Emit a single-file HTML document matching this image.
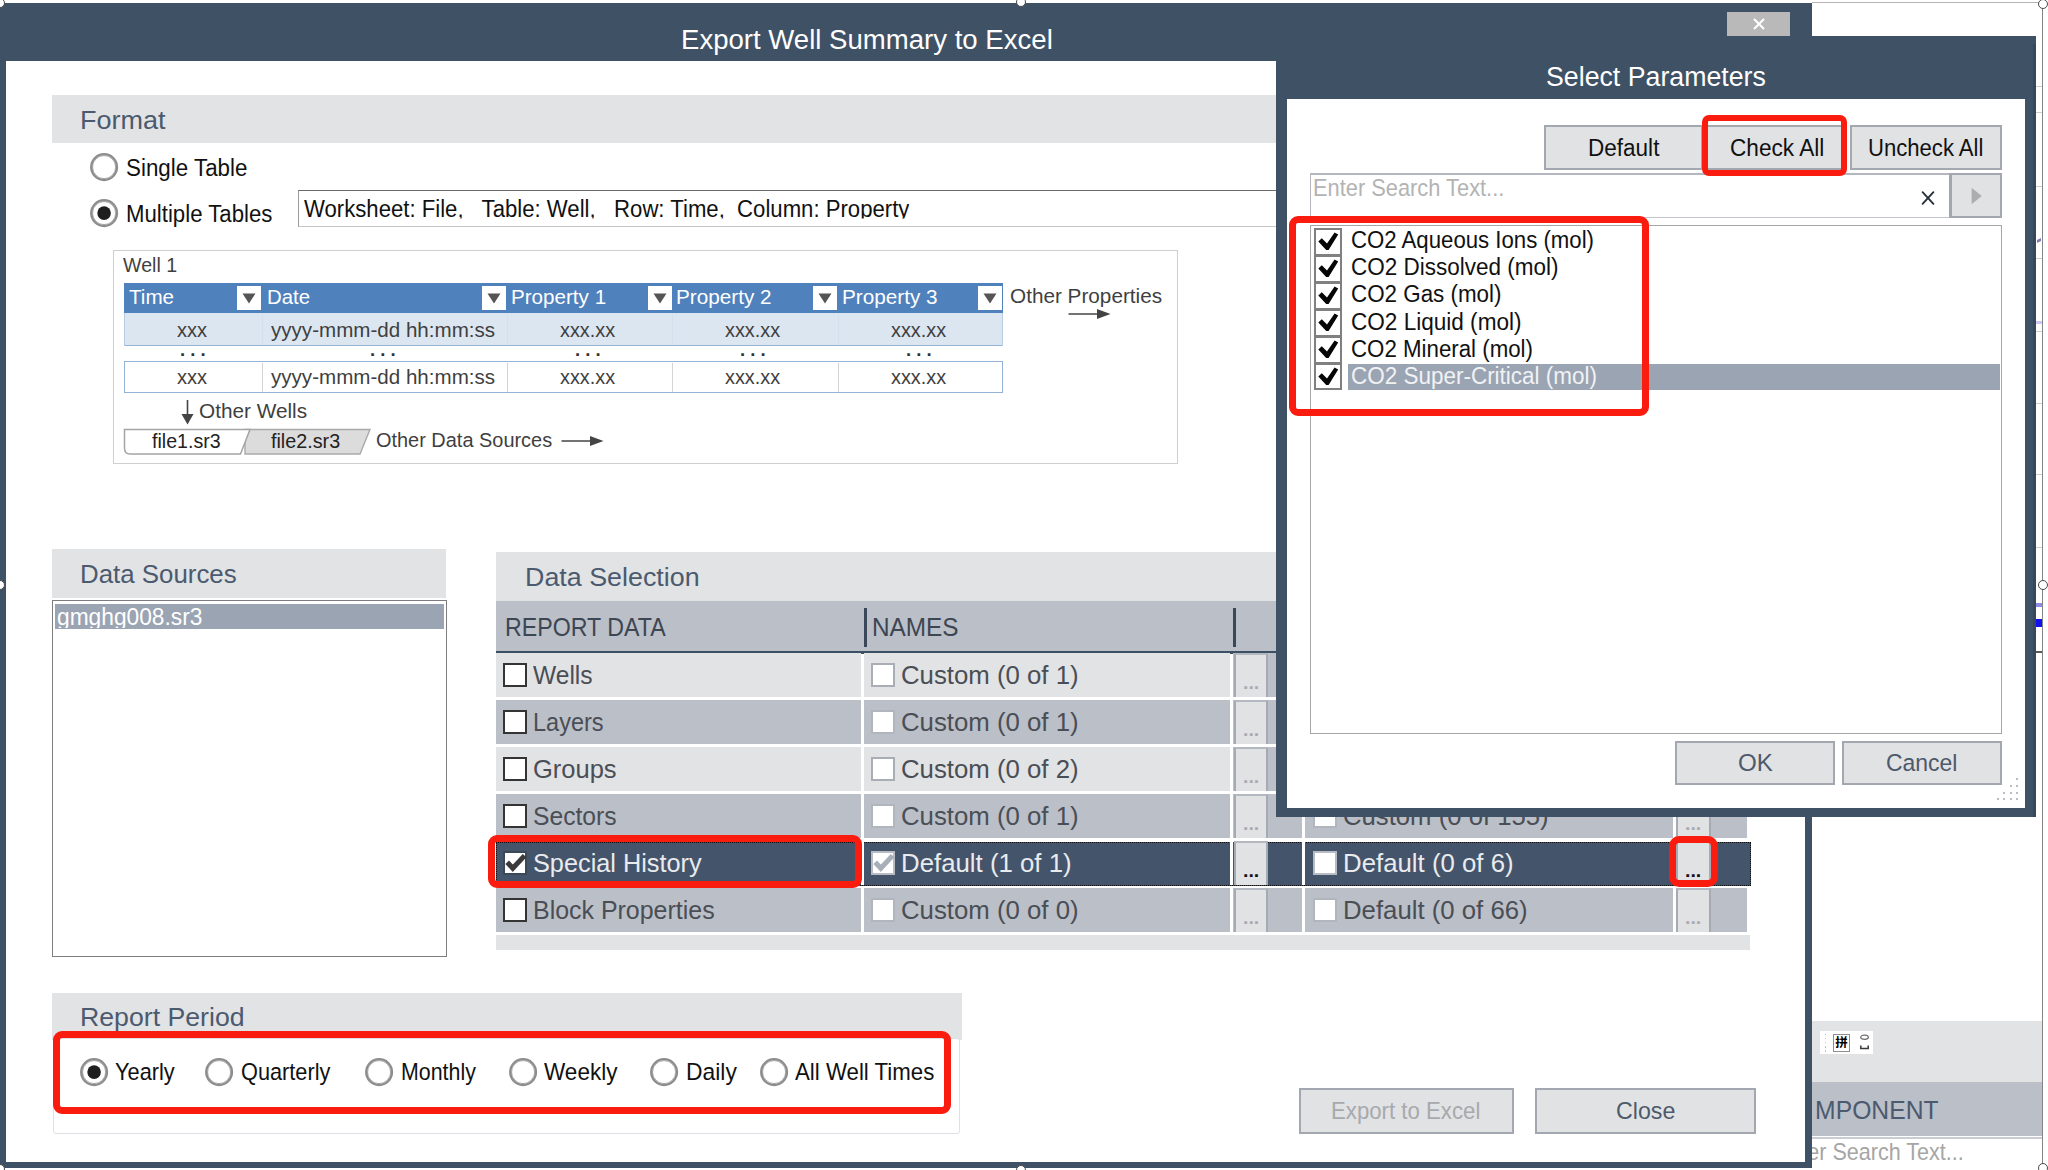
<!DOCTYPE html>
<html lang="en"><head><meta charset="utf-8"><title>Export Well Summary to Excel</title>
<style>
html,body{margin:0;padding:0;}
html{width:2048px;height:1170px;overflow:hidden;}
.stage{left:0;top:0;width:2048px;height:1170px;overflow:hidden;}
body{width:2048px;height:1170px;overflow:hidden;background:#fff;position:relative;
font-family:"Liberation Sans","Noto Sans CJK SC",sans-serif;}
div,span,svg{position:absolute;}
.t{white-space:pre;transform-origin:0 0;display:block;}
</style></head>
<body>
<div class="stage">
<div style="left:1812px;top:1021px;width:230px;height:61px;background:#e2e3e5;"></div>
<div style="left:1812px;top:1082px;width:230px;height:54px;background:#bbbfc8;"></div>
<div style="left:1812px;top:1137px;width:230px;height:2px;background:#c9ccd3;"></div>
<span class="t" style="left:1777.69px;top:1093.00px;font-size:26.16px;line-height:34px;height:34px;color:#4b5a6f;transform:scaleX(0.9447);clip-path:inset(0 0 0 39px);">COMPONENT</span>
<span class="t" style="left:1775.34px;top:1137.00px;font-size:23.26px;line-height:30px;height:30px;color:#a6a6a6;transform:scaleX(0.9267);">Enter Search Text...</span>
<div style="left:1820px;top:1031px;width:53px;height:23px;background:#ffffff;"></div>
<span class="t" style="left:1833px;top:1034px;font-size:12.5px;line-height:16px;color:#000;font-weight:700;border:1px solid #8f8f8f;width:15px;height:16px;text-align:center;">拼</span>
<svg style="left:1858px;top:1033px" width="14" height="20"><ellipse cx="6.5" cy="4.3" rx="3.8" ry="2.1" fill="none" stroke="#6a6a6a" stroke-width="1.3"/><path d="M2.8 12.6 V15.6 H10.2 V12.6" fill="none" stroke="#3a3a3a" stroke-width="1.5"/></svg>
<div style="left:1824.5px;top:1033.5px;width:1.5px;height:1.5px;background:#c4c4c4;"></div>
<div style="left:1824.5px;top:1037.7px;width:1.5px;height:1.5px;background:#c4c4c4;"></div>
<div style="left:1824.5px;top:1041.9px;width:1.5px;height:1.5px;background:#c4c4c4;"></div>
<div style="left:1824.5px;top:1046.1px;width:1.5px;height:1.5px;background:#c4c4c4;"></div>
<div style="left:1824.5px;top:1050.3px;width:1.5px;height:1.5px;background:#c4c4c4;"></div>
<div style="left:1812px;top:2px;width:231px;height:1px;background:#b5b5b5;"></div>
<div style="left:2042px;top:0px;width:1.2px;height:1170px;background:#858585;"></div>
<div style="left:2036px;top:86px;width:6px;height:1px;background:#cfcfcf;"></div>
<div style="left:2036px;top:112px;width:6px;height:1px;background:#cfcfcf;"></div>
<div style="left:2036px;top:186px;width:6px;height:1px;background:#cfcfcf;"></div>
<div style="left:2036px;top:258px;width:6px;height:1px;background:#cfcfcf;"></div>
<div style="left:2036px;top:331px;width:6px;height:1px;background:#cfcfcf;"></div>
<div style="left:2036px;top:402.5px;width:6px;height:1px;background:#cfcfcf;"></div>
<div style="left:2036px;top:474px;width:6px;height:1px;background:#cfcfcf;"></div>
<div style="left:2036px;top:547px;width:6px;height:1px;background:#cfcfcf;"></div>
<div style="left:2037px;top:239px;width:4px;height:2.5px;background:#7d7db8;transform:skewY(-25deg);"></div>
<div style="left:2036px;top:321px;width:6px;height:3px;background:#c9c9f2;"></div>
<div style="left:2036px;top:603px;width:6px;height:4px;background:#8c8ce6;"></div>
<div style="left:2036px;top:619px;width:6px;height:8px;background:#1212ee;"></div>
<div style="left:2036px;top:650.5px;width:6px;height:2px;background:#5a5a5a;"></div>
<div style="left:0px;top:2.8px;width:1812px;height:1165px;background:#3f5165;"></div>
<div style="left:6px;top:61px;width:1799px;height:1101px;background:#ffffff;"></div>
<span class="t" style="left:680.62px;top:20.50px;font-size:27.62px;line-height:37px;height:37px;color:#ffffff;transform:scaleX(0.9985);">Export Well Summary to Excel</span>
<div style="left:1727px;top:12px;width:63px;height:24px;background:#b9b9b9;"></div>
<svg style="left:1751px;top:16px" width="16" height="16" viewBox="0 0 16 16"><path d="M3 3 L13 13 M13 3 L3 13" stroke="#fff" stroke-width="2" fill="none"/></svg>
<div style="left:52px;top:95px;width:1224px;height:48px;background:#e2e3e5;"></div>
<span class="t" style="left:79.69px;top:102.75px;font-size:26.16px;line-height:34px;height:34px;color:#4b5a6f;transform:scaleX(1.0335);">Format</span>
<svg style="left:88.9px;top:152.1px" width="30.2" height="30.2"><circle cx="15.1" cy="15.1" r="12.9" fill="#fff" stroke="#8d8d8d" stroke-width="2.3"/><circle cx="15.1" cy="15.1" r="11.5" fill="none" stroke="#3a3a3a" stroke-width="0.7" opacity="0.55"/></svg>
<svg style="left:88.9px;top:197.8px" width="30.2" height="30.2"><circle cx="15.1" cy="15.1" r="12.9" fill="#fff" stroke="#8d8d8d" stroke-width="2.3"/><circle cx="15.1" cy="15.1" r="11.5" fill="none" stroke="#3a3a3a" stroke-width="0.7" opacity="0.55"/><circle cx="15.1" cy="15.1" r="6.8" fill="#1f1f1f"/></svg>
<span class="t" style="left:125.80px;top:152.00px;font-size:23.98px;line-height:31px;height:31px;color:#111;transform:scaleX(0.9327);">Single Table</span>
<span class="t" style="left:125.80px;top:197.50px;font-size:23.98px;line-height:31px;height:31px;color:#111;transform:scaleX(0.9259);">Multiple Tables</span>
<div style="left:298px;top:190px;width:992px;height:37px;background:#fff;border:1px solid #c6c6c6;border-top:1.5px solid #6a6a6a;border-left:1.2px solid #9a9a9a;box-sizing:border-box;overflow:hidden;"></div>
<span class="t" style="left:303.80px;top:192.50px;font-size:23.98px;line-height:31px;height:31px;color:#111;transform:scaleX(0.9237);clip-path:inset(0 0 5px 0);">Worksheet: File,   Table: Well,   Row: Time,  Column: Property</span>
<div style="left:113px;top:250px;width:1065px;height:214px;background:#fff;border:1.5px solid #cfcfcf;box-sizing:border-box;"></div>
<span class="t" style="left:122.95px;top:251.00px;font-size:21.08px;line-height:27px;height:27px;color:#3f3f3f;transform:scaleX(0.9299);">Well 1</span>
<div style="left:124px;top:283px;width:879px;height:30px;background:#4f81bd;"></div>
<span class="t" style="left:128.95px;top:283.00px;font-size:21.08px;line-height:27px;height:27px;color:#fff;transform:scaleX(0.9793);">Time</span>
<div style="left:237px;top:286px;width:24px;height:24px;background:#fff;"></div>
<svg style="left:237px;top:286px" width="24" height="24"><path d="M5.5 7.5 L18.5 7.5 L12 17.5 Z" fill="#555"/></svg>
<span class="t" style="left:266.95px;top:283.00px;font-size:21.08px;line-height:27px;height:27px;color:#fff;transform:scaleX(0.9680);">Date</span>
<div style="left:482px;top:286px;width:24px;height:24px;background:#fff;"></div>
<svg style="left:482px;top:286px" width="24" height="24"><path d="M5.5 7.5 L18.5 7.5 L12 17.5 Z" fill="#555"/></svg>
<span class="t" style="left:510.95px;top:283.00px;font-size:21.08px;line-height:27px;height:27px;color:#fff;transform:scaleX(0.9780);">Property 1</span>
<div style="left:647.5px;top:286px;width:24px;height:24px;background:#fff;"></div>
<svg style="left:647.5px;top:286px" width="24" height="24"><path d="M5.5 7.5 L18.5 7.5 L12 17.5 Z" fill="#555"/></svg>
<span class="t" style="left:676.45px;top:283.00px;font-size:21.08px;line-height:27px;height:27px;color:#fff;transform:scaleX(0.9831);">Property 2</span>
<div style="left:813px;top:286px;width:24px;height:24px;background:#fff;"></div>
<svg style="left:813px;top:286px" width="24" height="24"><path d="M5.5 7.5 L18.5 7.5 L12 17.5 Z" fill="#555"/></svg>
<span class="t" style="left:841.95px;top:283.00px;font-size:21.08px;line-height:27px;height:27px;color:#fff;transform:scaleX(0.9831);">Property 3</span>
<div style="left:978px;top:286px;width:24px;height:24px;background:#fff;"></div>
<svg style="left:978px;top:286px" width="24" height="24"><path d="M5.5 7.5 L18.5 7.5 L12 17.5 Z" fill="#555"/></svg>
<div style="left:124px;top:313px;width:879px;height:33px;background:#dce6f1;border-bottom:1.5px solid #95b3d7;box-sizing:border-box;"></div>
<div style="left:124px;top:313px;width:1px;height:33px;background:#b8cce4;"></div>
<div style="left:1002px;top:313px;width:1px;height:33px;background:#b8cce4;"></div>
<div style="left:124px;top:361px;width:879px;height:32px;background:#fff;border:1.5px solid #95b3d7;box-sizing:border-box;"></div>
<div style="left:261.5px;top:362.5px;width:1px;height:29px;background:#d4d4d4;"></div>
<div style="left:261.5px;top:314px;width:1px;height:30.5px;background:#d5e0ee;"></div>
<div style="left:506.5px;top:362.5px;width:1px;height:29px;background:#d4d4d4;"></div>
<div style="left:506.5px;top:314px;width:1px;height:30.5px;background:#d5e0ee;"></div>
<div style="left:672px;top:362.5px;width:1px;height:29px;background:#d4d4d4;"></div>
<div style="left:672px;top:314px;width:1px;height:30.5px;background:#d5e0ee;"></div>
<div style="left:837.5px;top:362.5px;width:1px;height:29px;background:#d4d4d4;"></div>
<div style="left:837.5px;top:314px;width:1px;height:30.5px;background:#d5e0ee;"></div>
<span class="t" style="left:176.95px;top:316.00px;font-size:21.08px;line-height:27px;height:27px;color:#3f3f3f;transform:scaleX(0.9520);">xxx</span>
<span class="t" style="left:270.95px;top:316.00px;font-size:21.08px;line-height:27px;height:27px;color:#3f3f3f;transform:scaleX(0.9764);">yyyy-mmm-dd hh:mm:ss</span>
<span class="t" style="left:559.95px;top:316.00px;font-size:21.08px;line-height:27px;height:27px;color:#3f3f3f;transform:scaleX(0.9410);">xxx.xx</span>
<span class="t" style="left:725.45px;top:316.00px;font-size:21.08px;line-height:27px;height:27px;color:#3f3f3f;transform:scaleX(0.9410);">xxx.xx</span>
<span class="t" style="left:890.95px;top:316.00px;font-size:21.08px;line-height:27px;height:27px;color:#3f3f3f;transform:scaleX(0.9410);">xxx.xx</span>
<span class="t" style="left:176.95px;top:362.50px;font-size:21.08px;line-height:27px;height:27px;color:#3f3f3f;transform:scaleX(0.9520);">xxx</span>
<span class="t" style="left:270.95px;top:362.50px;font-size:21.08px;line-height:27px;height:27px;color:#3f3f3f;transform:scaleX(0.9764);">yyyy-mmm-dd hh:mm:ss</span>
<span class="t" style="left:559.95px;top:362.50px;font-size:21.08px;line-height:27px;height:27px;color:#3f3f3f;transform:scaleX(0.9410);">xxx.xx</span>
<span class="t" style="left:725.45px;top:362.50px;font-size:21.08px;line-height:27px;height:27px;color:#3f3f3f;transform:scaleX(0.9410);">xxx.xx</span>
<span class="t" style="left:890.95px;top:362.50px;font-size:21.08px;line-height:27px;height:27px;color:#3f3f3f;transform:scaleX(0.9410);">xxx.xx</span>
<span class="t" style="left:179.63px;top:337.50px;font-size:17.44px;line-height:24px;height:24px;color:#333;font-weight:700;transform:scaleX(1.0623);">. . .</span>
<span class="t" style="left:370.13px;top:337.50px;font-size:17.44px;line-height:24px;height:24px;color:#333;font-weight:700;transform:scaleX(1.0623);">. . .</span>
<span class="t" style="left:574.63px;top:337.50px;font-size:17.44px;line-height:24px;height:24px;color:#333;font-weight:700;transform:scaleX(1.0623);">. . .</span>
<span class="t" style="left:740.13px;top:337.50px;font-size:17.44px;line-height:24px;height:24px;color:#333;font-weight:700;transform:scaleX(1.0623);">. . .</span>
<span class="t" style="left:905.63px;top:337.50px;font-size:17.44px;line-height:24px;height:24px;color:#333;font-weight:700;transform:scaleX(1.0623);">. . .</span>
<svg style="left:180px;top:398px" width="16" height="28"><path d="M7.5 2 V21" stroke="#444" stroke-width="1.6" fill="none"/><path d="M1.5 16 L13.5 16 L7.5 26.5 Z" fill="#444"/></svg>
<span class="t" style="left:198.95px;top:397.00px;font-size:21.08px;line-height:27px;height:27px;color:#3f3f3f;transform:scaleX(0.9853);">Other Wells</span>
<svg style="left:120px;top:426px" width="260" height="32" viewBox="120 426 260 32"><path d="M245 429.5 H370 L360 454 H245 Z" fill="#dcdcdc" stroke="#a9a9a9" stroke-width="1.4"/><path d="M124.5 429.5 H250 L240.5 454 H130 Q124.5 454 124.5 448 Z" fill="#fff" stroke="#a4a4a4" stroke-width="1.5"/></svg>
<span class="t" style="left:152.45px;top:426.60px;font-size:21.08px;line-height:27px;height:27px;color:#222;transform:scaleX(0.9295);">file1.sr3</span>
<span class="t" style="left:271.45px;top:426.60px;font-size:21.08px;line-height:27px;height:27px;color:#222;transform:scaleX(0.9363);">file2.sr3</span>
<span class="t" style="left:375.95px;top:426.00px;font-size:21.08px;line-height:27px;height:27px;color:#3f3f3f;transform:scaleX(0.9454);">Other Data Sources</span>
<svg style="left:560px;top:434px" width="46" height="14"><path d="M1.5 7 H32" stroke="#444" stroke-width="1.5"/><path d="M30 2 L43.5 7 L30 12 Z" fill="#444"/></svg>
<span class="t" style="left:1009.95px;top:282.00px;font-size:21.08px;line-height:27px;height:27px;color:#3f3f3f;transform:scaleX(0.9836);">Other Properties</span>
<svg style="left:1067px;top:307px" width="46" height="14"><path d="M1.5 7 H32" stroke="#444" stroke-width="1.5"/><path d="M30 2 L43.5 7 L30 12 Z" fill="#444"/></svg>
<div style="left:52px;top:549px;width:394px;height:49px;background:#e2e3e5;"></div>
<span class="t" style="left:79.69px;top:557.00px;font-size:26.16px;line-height:34px;height:34px;color:#4b5a6f;transform:scaleX(0.9882);">Data Sources</span>
<div style="left:52px;top:600px;width:395px;height:357px;background:#fff;border:1.3px solid #7d7d7d;box-sizing:border-box;"></div>
<div style="left:55px;top:604px;width:389px;height:24.5px;background:#9ba4b3;overflow:hidden;"></div>
<span class="t" style="left:56.80px;top:601.00px;font-size:23.98px;line-height:31px;height:31px;color:#fff;transform:scaleX(0.9489);clip-path:inset(0 0 4px 0);">gmghg008.sr3</span>
<div style="left:496px;top:552px;width:1254px;height:49px;background:#e2e3e5;"></div>
<span class="t" style="left:524.69px;top:559.50px;font-size:26.16px;line-height:34px;height:34px;color:#4b5a6f;transform:scaleX(1.0264);">Data Selection</span>
<div style="left:496px;top:601px;width:1254px;height:50px;background:#bbbfc8;"></div>
<div style="left:496px;top:650.5px;width:1254px;height:3px;background:#3c4f63;"></div>
<div style="left:863.5px;top:608px;width:3px;height:39px;background:#3a4859;"></div>
<div style="left:1232.5px;top:608px;width:3px;height:39px;background:#3a4859;"></div>
<div style="left:1304.5px;top:608px;width:3px;height:39px;background:#3a4859;"></div>
<span class="t" style="left:504.69px;top:609.50px;font-size:26.16px;line-height:34px;height:34px;color:#3d4653;transform:scaleX(0.8864);">REPORT DATA</span>
<span class="t" style="left:871.69px;top:609.50px;font-size:26.16px;line-height:34px;height:34px;color:#3d4653;transform:scaleX(0.9312);">NAMES</span>
<div style="left:496px;top:653px;width:365px;height:44px;background:#e2e3e5;"></div>
<div style="left:864px;top:653px;width:366px;height:44px;background:#e2e3e5;"></div>
<div style="left:1233px;top:653px;width:69px;height:44px;background:#bbbfc8;"></div>
<div style="left:1305px;top:653px;width:368px;height:44px;background:#e2e3e5;"></div>
<div style="left:1676px;top:653px;width:71px;height:44px;background:#bbbfc8;"></div>
<div style="left:1234px;top:653px;width:34px;height:44px;background:#e1e2e4;border-left:2px solid #a6aab3;border-right:2px solid #a6aab3;border-top:2px solid #b4b8c0;box-sizing:border-box;"></div>
<span class="t" style="left:1242.63px;top:670.50px;font-size:17.44px;line-height:24px;height:24px;color:#a9abb0;font-weight:700;transform:scaleX(1.1167);">...</span>
<div style="left:1676px;top:653px;width:34.5px;height:44px;background:#e1e2e4;border-left:2px solid #a6aab3;border-right:2px solid #a6aab3;border-top:2px solid #b4b8c0;box-sizing:border-box;"></div>
<span class="t" style="left:1684.63px;top:670.50px;font-size:17.44px;line-height:24px;height:24px;color:#a9abb0;font-weight:700;transform:scaleX(1.1167);">...</span>
<div style="left:503px;top:663px;width:24px;height:24px;background:#fff;border:2.7px solid #343434;box-sizing:border-box;"></div>
<span class="t" style="left:532.69px;top:658.30px;font-size:26.16px;line-height:34px;height:34px;color:#4a4e55;transform:scaleX(0.9393);">Wells</span>
<div style="left:871px;top:663px;width:24px;height:24px;background:#fff;border:2.3px solid #a9adb6;box-sizing:border-box;"></div>
<span class="t" style="left:900.69px;top:658.30px;font-size:26.16px;line-height:34px;height:34px;color:#4a4e55;transform:scaleX(0.9854);">Custom (0 of 1)</span>
<div style="left:496px;top:700px;width:365px;height:44px;background:#bbbfc8;"></div>
<div style="left:864px;top:700px;width:366px;height:44px;background:#bbbfc8;"></div>
<div style="left:1233px;top:700px;width:69px;height:44px;background:#bbbfc8;"></div>
<div style="left:1305px;top:700px;width:368px;height:44px;background:#bbbfc8;"></div>
<div style="left:1676px;top:700px;width:71px;height:44px;background:#bbbfc8;"></div>
<div style="left:1234px;top:700px;width:34px;height:44px;background:#e1e2e4;border-left:2px solid #a6aab3;border-right:2px solid #a6aab3;border-top:2px solid #b4b8c0;box-sizing:border-box;"></div>
<span class="t" style="left:1242.63px;top:717.50px;font-size:17.44px;line-height:24px;height:24px;color:#a9abb0;font-weight:700;transform:scaleX(1.1167);">...</span>
<div style="left:1676px;top:700px;width:34.5px;height:44px;background:#e1e2e4;border-left:2px solid #a6aab3;border-right:2px solid #a6aab3;border-top:2px solid #b4b8c0;box-sizing:border-box;"></div>
<span class="t" style="left:1684.63px;top:717.50px;font-size:17.44px;line-height:24px;height:24px;color:#a9abb0;font-weight:700;transform:scaleX(1.1167);">...</span>
<div style="left:503px;top:710px;width:24px;height:24px;background:#fff;border:2.7px solid #343434;box-sizing:border-box;"></div>
<span class="t" style="left:532.69px;top:705.30px;font-size:26.16px;line-height:34px;height:34px;color:#4a4e55;transform:scaleX(0.8994);">Layers</span>
<div style="left:871px;top:710px;width:24px;height:24px;background:#fff;border:2.3px solid #b1b5be;box-sizing:border-box;"></div>
<span class="t" style="left:900.69px;top:705.30px;font-size:26.16px;line-height:34px;height:34px;color:#4a4e55;transform:scaleX(0.9854);">Custom (0 of 1)</span>
<div style="left:496px;top:747px;width:365px;height:44px;background:#e2e3e5;"></div>
<div style="left:864px;top:747px;width:366px;height:44px;background:#e2e3e5;"></div>
<div style="left:1233px;top:747px;width:69px;height:44px;background:#bbbfc8;"></div>
<div style="left:1305px;top:747px;width:368px;height:44px;background:#e2e3e5;"></div>
<div style="left:1676px;top:747px;width:71px;height:44px;background:#bbbfc8;"></div>
<div style="left:1234px;top:747px;width:34px;height:44px;background:#e1e2e4;border-left:2px solid #a6aab3;border-right:2px solid #a6aab3;border-top:2px solid #b4b8c0;box-sizing:border-box;"></div>
<span class="t" style="left:1242.63px;top:764.50px;font-size:17.44px;line-height:24px;height:24px;color:#a9abb0;font-weight:700;transform:scaleX(1.1167);">...</span>
<div style="left:1676px;top:747px;width:34.5px;height:44px;background:#e1e2e4;border-left:2px solid #a6aab3;border-right:2px solid #a6aab3;border-top:2px solid #b4b8c0;box-sizing:border-box;"></div>
<span class="t" style="left:1684.63px;top:764.50px;font-size:17.44px;line-height:24px;height:24px;color:#a9abb0;font-weight:700;transform:scaleX(1.1167);">...</span>
<div style="left:503px;top:757px;width:24px;height:24px;background:#fff;border:2.7px solid #343434;box-sizing:border-box;"></div>
<span class="t" style="left:532.69px;top:752.30px;font-size:26.16px;line-height:34px;height:34px;color:#4a4e55;transform:scaleX(0.9748);">Groups</span>
<div style="left:871px;top:757px;width:24px;height:24px;background:#fff;border:2.3px solid #a9adb6;box-sizing:border-box;"></div>
<span class="t" style="left:900.69px;top:752.30px;font-size:26.16px;line-height:34px;height:34px;color:#4a4e55;transform:scaleX(0.9854);">Custom (0 of 2)</span>
<div style="left:496px;top:794px;width:365px;height:44px;background:#bbbfc8;"></div>
<div style="left:864px;top:794px;width:366px;height:44px;background:#bbbfc8;"></div>
<div style="left:1233px;top:794px;width:69px;height:44px;background:#bbbfc8;"></div>
<div style="left:1305px;top:794px;width:368px;height:44px;background:#bbbfc8;"></div>
<div style="left:1676px;top:794px;width:71px;height:44px;background:#bbbfc8;"></div>
<div style="left:1234px;top:794px;width:34px;height:44px;background:#e1e2e4;border-left:2px solid #a6aab3;border-right:2px solid #a6aab3;border-top:2px solid #b4b8c0;box-sizing:border-box;"></div>
<span class="t" style="left:1242.63px;top:811.50px;font-size:17.44px;line-height:24px;height:24px;color:#a9abb0;font-weight:700;transform:scaleX(1.1167);">...</span>
<div style="left:1676px;top:794px;width:34.5px;height:44px;background:#e1e2e4;border-left:2px solid #a6aab3;border-right:2px solid #a6aab3;border-top:2px solid #b4b8c0;box-sizing:border-box;"></div>
<span class="t" style="left:1684.63px;top:811.50px;font-size:17.44px;line-height:24px;height:24px;color:#a9abb0;font-weight:700;transform:scaleX(1.1167);">...</span>
<div style="left:503px;top:804px;width:24px;height:24px;background:#fff;border:2.7px solid #343434;box-sizing:border-box;"></div>
<span class="t" style="left:532.69px;top:799.30px;font-size:26.16px;line-height:34px;height:34px;color:#4a4e55;transform:scaleX(0.9428);">Sectors</span>
<div style="left:871px;top:804px;width:24px;height:24px;background:#fff;border:2.3px solid #b1b5be;box-sizing:border-box;"></div>
<span class="t" style="left:900.69px;top:799.30px;font-size:26.16px;line-height:34px;height:34px;color:#4a4e55;transform:scaleX(0.9854);">Custom (0 of 1)</span>
<div style="left:1313px;top:804px;width:24px;height:24px;background:#fff;border:2.3px solid #b1b5be;box-sizing:border-box;"></div>
<span class="t" style="left:1342.69px;top:799.30px;font-size:26.16px;line-height:34px;height:34px;color:#4a4e55;transform:scaleX(0.9822);">Custom (0 of 155)</span>
<div style="left:496px;top:841.5px;width:1254.5px;height:44px;background:#44546a;outline:1.3px dotted #0c0c0c;outline-offset:-1px;"></div>
<div style="left:861px;top:841px;width:3px;height:44px;background:#fff;"></div>
<div style="left:1230px;top:841px;width:3px;height:44px;background:#fff;"></div>
<div style="left:1302px;top:841px;width:3px;height:44px;background:#fff;"></div>
<div style="left:1673px;top:841px;width:3px;height:44px;background:#fff;"></div>
<div style="left:1234px;top:841px;width:34px;height:44px;background:#e1e2e4;border-left:2px solid #a6aab3;border-right:2px solid #a6aab3;border-top:2px solid #b4b8c0;box-sizing:border-box;"></div>
<span class="t" style="left:1242.63px;top:858.50px;font-size:17.44px;line-height:24px;height:24px;color:#111;font-weight:700;transform:scaleX(1.1167);">...</span>
<div style="left:1676px;top:841px;width:34.5px;height:44px;background:#e1e2e4;border-left:2px solid #a6aab3;border-right:2px solid #a6aab3;border-top:2px solid #b4b8c0;box-sizing:border-box;"></div>
<span class="t" style="left:1684.63px;top:858.50px;font-size:17.44px;line-height:24px;height:24px;color:#111;font-weight:700;transform:scaleX(1.1167);">...</span>
<div style="left:503px;top:851px;width:24px;height:24px;background:#fff;border:2.7px solid #3b4858;box-sizing:border-box;"></div>
<svg style="left:503px;top:851px" width="24" height="24" viewBox="0 0 24 24"><path d="M4.2 11.2 L9.8 17.3 L21.6 4.6" stroke="#3a3a3a" stroke-width="5" fill="none" stroke-linejoin="miter"/></svg>
<span class="t" style="left:532.69px;top:846.30px;font-size:26.16px;line-height:34px;height:34px;color:#e9ebee;transform:scaleX(0.9666);">Special History</span>
<div style="left:871px;top:851px;width:24px;height:24px;background:#fff;border:2.3px solid #b6bbc4;box-sizing:border-box;"></div>
<svg style="left:871px;top:851px" width="24" height="24" viewBox="0 0 24 24"><path d="M4.2 11.2 L9.8 17.3 L21.6 4.6" stroke="#a9afb9" stroke-width="5" fill="none" stroke-linejoin="miter"/></svg>
<span class="t" style="left:900.69px;top:846.30px;font-size:26.16px;line-height:34px;height:34px;color:#e9ebee;transform:scaleX(0.9861);">Default (1 of 1)</span>
<div style="left:1313px;top:851px;width:24px;height:24px;background:#fff;border:2.3px solid #b6bbc4;box-sizing:border-box;"></div>
<span class="t" style="left:1342.69px;top:846.30px;font-size:26.16px;line-height:34px;height:34px;color:#e9ebee;transform:scaleX(0.9861);">Default (0 of 6)</span>
<div style="left:496px;top:888px;width:365px;height:44px;background:#bbbfc8;"></div>
<div style="left:864px;top:888px;width:366px;height:44px;background:#bbbfc8;"></div>
<div style="left:1233px;top:888px;width:69px;height:44px;background:#bbbfc8;"></div>
<div style="left:1305px;top:888px;width:368px;height:44px;background:#bbbfc8;"></div>
<div style="left:1676px;top:888px;width:71px;height:44px;background:#bbbfc8;"></div>
<div style="left:1234px;top:888px;width:34px;height:44px;background:#e1e2e4;border-left:2px solid #a6aab3;border-right:2px solid #a6aab3;border-top:2px solid #b4b8c0;box-sizing:border-box;"></div>
<span class="t" style="left:1242.63px;top:905.50px;font-size:17.44px;line-height:24px;height:24px;color:#a9abb0;font-weight:700;transform:scaleX(1.1167);">...</span>
<div style="left:1676px;top:888px;width:34.5px;height:44px;background:#e1e2e4;border-left:2px solid #a6aab3;border-right:2px solid #a6aab3;border-top:2px solid #b4b8c0;box-sizing:border-box;"></div>
<span class="t" style="left:1684.63px;top:905.50px;font-size:17.44px;line-height:24px;height:24px;color:#a9abb0;font-weight:700;transform:scaleX(1.1167);">...</span>
<div style="left:503px;top:898px;width:24px;height:24px;background:#fff;border:2.7px solid #343434;box-sizing:border-box;"></div>
<span class="t" style="left:532.69px;top:893.30px;font-size:26.16px;line-height:34px;height:34px;color:#4a4e55;transform:scaleX(0.9537);">Block Properties</span>
<div style="left:871px;top:898px;width:24px;height:24px;background:#fff;border:2.3px solid #b1b5be;box-sizing:border-box;"></div>
<span class="t" style="left:900.69px;top:893.30px;font-size:26.16px;line-height:34px;height:34px;color:#4a4e55;transform:scaleX(0.9854);">Custom (0 of 0)</span>
<div style="left:1313px;top:898px;width:24px;height:24px;background:#fff;border:2.3px solid #b1b5be;box-sizing:border-box;"></div>
<span class="t" style="left:1342.69px;top:893.30px;font-size:26.16px;line-height:34px;height:34px;color:#4a4e55;transform:scaleX(0.9843);">Default (0 of 66)</span>
<div style="left:496px;top:935px;width:1254px;height:14.5px;background:#e2e3e5;"></div>
<div style="left:52px;top:992.5px;width:910px;height:47.5px;background:#e2e3e5;"></div>
<span class="t" style="left:79.69px;top:1000.00px;font-size:26.16px;line-height:34px;height:34px;color:#4b5a6f;transform:scaleX(1.0200);">Report Period</span>
<div style="left:53px;top:1038px;width:907px;height:96px;background:#fff;border:1.5px solid #dde1e6;box-sizing:border-box;border-radius:3px;"></div>
<svg style="left:79.1px;top:1056.9px" width="30.2" height="30.2"><circle cx="15.1" cy="15.1" r="12.9" fill="#fff" stroke="#8d8d8d" stroke-width="2.3"/><circle cx="15.1" cy="15.1" r="11.5" fill="none" stroke="#3a3a3a" stroke-width="0.7" opacity="0.55"/><circle cx="15.1" cy="15.1" r="6.8" fill="#1f1f1f"/></svg>
<span class="t" style="left:115.44px;top:1057.00px;font-size:23.26px;line-height:30px;height:30px;color:#111;transform:scaleX(0.9364);">Yearly</span>
<svg style="left:204.4px;top:1056.9px" width="30.2" height="30.2"><circle cx="15.1" cy="15.1" r="12.9" fill="#fff" stroke="#8d8d8d" stroke-width="2.3"/><circle cx="15.1" cy="15.1" r="11.5" fill="none" stroke="#3a3a3a" stroke-width="0.7" opacity="0.55"/></svg>
<span class="t" style="left:240.84px;top:1057.00px;font-size:23.26px;line-height:30px;height:30px;color:#111;transform:scaleX(0.9341);">Quarterly</span>
<svg style="left:363.9px;top:1056.9px" width="30.2" height="30.2"><circle cx="15.1" cy="15.1" r="12.9" fill="#fff" stroke="#8d8d8d" stroke-width="2.3"/><circle cx="15.1" cy="15.1" r="11.5" fill="none" stroke="#3a3a3a" stroke-width="0.7" opacity="0.55"/></svg>
<span class="t" style="left:400.84px;top:1057.00px;font-size:23.26px;line-height:30px;height:30px;color:#111;transform:scaleX(0.9190);">Monthly</span>
<svg style="left:507.9px;top:1056.9px" width="30.2" height="30.2"><circle cx="15.1" cy="15.1" r="12.9" fill="#fff" stroke="#8d8d8d" stroke-width="2.3"/><circle cx="15.1" cy="15.1" r="11.5" fill="none" stroke="#3a3a3a" stroke-width="0.7" opacity="0.55"/></svg>
<span class="t" style="left:544.44px;top:1057.00px;font-size:23.26px;line-height:30px;height:30px;color:#111;transform:scaleX(0.9698);">Weekly</span>
<svg style="left:649.3px;top:1056.9px" width="30.2" height="30.2"><circle cx="15.1" cy="15.1" r="12.9" fill="#fff" stroke="#8d8d8d" stroke-width="2.3"/><circle cx="15.1" cy="15.1" r="11.5" fill="none" stroke="#3a3a3a" stroke-width="0.7" opacity="0.55"/></svg>
<span class="t" style="left:685.74px;top:1057.00px;font-size:23.26px;line-height:30px;height:30px;color:#111;transform:scaleX(0.9833);">Daily</span>
<svg style="left:758.5px;top:1056.9px" width="30.2" height="30.2"><circle cx="15.1" cy="15.1" r="12.9" fill="#fff" stroke="#8d8d8d" stroke-width="2.3"/><circle cx="15.1" cy="15.1" r="11.5" fill="none" stroke="#3a3a3a" stroke-width="0.7" opacity="0.55"/></svg>
<span class="t" style="left:794.84px;top:1057.00px;font-size:23.26px;line-height:30px;height:30px;color:#111;transform:scaleX(0.9572);">All Well Times</span>
<div style="left:1299px;top:1088px;width:214.5px;height:45.5px;background:#e1e2e4;border:2.4px solid #a3a7b0;box-sizing:border-box;"></div>
<span class="t" style="left:1330.82px;top:1095.00px;font-size:23.69px;line-height:32px;height:32px;color:#a7a9ad;transform:scaleX(0.9376);">Export to Excel</span>
<div style="left:1535px;top:1088px;width:220.5px;height:45.5px;background:#e1e2e4;border:2.4px solid #a3a7b0;box-sizing:border-box;"></div>
<span class="t" style="left:1615.82px;top:1095.00px;font-size:23.69px;line-height:32px;height:32px;color:#4e596b;transform:scaleX(0.9803);">Close</span>
<div style="left:1276px;top:36px;width:759.5px;height:780.5px;background:#3f5165;"></div>
<div style="left:2032.5px;top:44px;width:3px;height:772.5px;background:#37485b;"></div>
<div style="left:1287px;top:98.5px;width:738.3px;height:709px;background:#ffffff;"></div>
<span class="t" style="left:1545.58px;top:57.00px;font-size:28.34px;line-height:38px;height:38px;color:#ffffff;transform:scaleX(0.9434);">Select Parameters</span>
<div style="left:1543.5px;top:125px;width:159px;height:44.5px;background:#e1e2e4;border:2.4px solid #a3a7b0;box-sizing:border-box;"></div>
<span class="t" style="left:1588.30px;top:132.00px;font-size:23.98px;line-height:31px;height:31px;color:#111;transform:scaleX(0.9400);">Default</span>
<div style="left:1702.5px;top:125px;width:144.5px;height:44.5px;background:#e1e2e4;border:2.4px solid #a3a7b0;box-sizing:border-box;"></div>
<span class="t" style="left:1729.80px;top:132.00px;font-size:23.98px;line-height:31px;height:31px;color:#111;transform:scaleX(0.9447);">Check All</span>
<div style="left:1849.5px;top:125px;width:152.5px;height:44.5px;background:#e1e2e4;border:2.4px solid #a3a7b0;box-sizing:border-box;"></div>
<span class="t" style="left:1867.80px;top:132.00px;font-size:23.98px;line-height:31px;height:31px;color:#111;transform:scaleX(0.9215);">Uncheck All</span>
<div style="left:1310px;top:173px;width:641px;height:45.4px;background:#fff;border-top:2px solid #b4b7bf;border-left:1.5px solid #b4b7bf;border-bottom:1.4px solid #c3c6cc;box-sizing:border-box;"></div>
<span class="t" style="left:1312.84px;top:172.50px;font-size:23.26px;line-height:30px;height:30px;color:#b3b3b3;transform:scaleX(0.9389);">Enter Search Text...</span>
<svg style="left:1920px;top:190px" width="16" height="16"><path d="M2.6 2.2 L13.4 13.8 M13.4 2.2 L2.6 13.8" stroke="#27303b" stroke-width="1.9" fill="none" stroke-linecap="round"/></svg>
<div style="left:1949.4px;top:173px;width:52.6px;height:45.2px;background:#e1e2e4;border:2.7px solid #a3a7b0;box-sizing:border-box;border-left-width:3.4px;"></div>
<svg style="left:1970px;top:186px" width="14" height="20"><path d="M1.6 1.7 L11.7 10 L1.6 18.3 Z" fill="#adadad"/></svg>
<div style="left:1310px;top:224.5px;width:692px;height:509.5px;background:#fff;border:1.4px solid #a6a6a6;box-sizing:border-box;"></div>
<div style="left:1314.3px;top:227.5px;width:28px;height:28.4px;background:#fff;border:2.5px solid #808080;box-sizing:border-box;"></div>
<svg style="left:1314.3px;top:227.5px" width="28" height="28" viewBox="0 0 28 28"><path d="M4.3 13.6 L7.8 10.3 L13.0 15.4 L20.6 4.4 L24.2 6.6 L14.6 21.9 L12.2 21.9 Z" fill="#050505"/></svg>
<span class="t" style="left:1351.20px;top:224.10px;font-size:23.98px;line-height:31px;height:31px;color:#111;transform:scaleX(0.9259);">CO2 Aqueous Ions (mol)</span>
<div style="left:1314.3px;top:254.65px;width:28px;height:28.4px;background:#fff;border:2.5px solid #808080;box-sizing:border-box;"></div>
<svg style="left:1314.3px;top:254.65px" width="28" height="28" viewBox="0 0 28 28"><path d="M4.3 13.6 L7.8 10.3 L13.0 15.4 L20.6 4.4 L24.2 6.6 L14.6 21.9 L12.2 21.9 Z" fill="#050505"/></svg>
<span class="t" style="left:1351.20px;top:251.25px;font-size:23.98px;line-height:31px;height:31px;color:#111;transform:scaleX(0.9385);">CO2 Dissolved (mol)</span>
<div style="left:1314.3px;top:281.8px;width:28px;height:28.4px;background:#fff;border:2.5px solid #808080;box-sizing:border-box;"></div>
<svg style="left:1314.3px;top:281.8px" width="28" height="28" viewBox="0 0 28 28"><path d="M4.3 13.6 L7.8 10.3 L13.0 15.4 L20.6 4.4 L24.2 6.6 L14.6 21.9 L12.2 21.9 Z" fill="#050505"/></svg>
<span class="t" style="left:1351.20px;top:278.40px;font-size:23.98px;line-height:31px;height:31px;color:#111;transform:scaleX(0.9339);">CO2 Gas (mol)</span>
<div style="left:1314.3px;top:308.95px;width:28px;height:28.4px;background:#fff;border:2.5px solid #808080;box-sizing:border-box;"></div>
<svg style="left:1314.3px;top:308.95px" width="28" height="28" viewBox="0 0 28 28"><path d="M4.3 13.6 L7.8 10.3 L13.0 15.4 L20.6 4.4 L24.2 6.6 L14.6 21.9 L12.2 21.9 Z" fill="#050505"/></svg>
<span class="t" style="left:1351.20px;top:305.55px;font-size:23.98px;line-height:31px;height:31px;color:#111;transform:scaleX(0.9411);">CO2 Liquid (mol)</span>
<div style="left:1314.3px;top:336.1px;width:28px;height:28.4px;background:#fff;border:2.5px solid #808080;box-sizing:border-box;"></div>
<svg style="left:1314.3px;top:336.1px" width="28" height="28" viewBox="0 0 28 28"><path d="M4.3 13.6 L7.8 10.3 L13.0 15.4 L20.6 4.4 L24.2 6.6 L14.6 21.9 L12.2 21.9 Z" fill="#050505"/></svg>
<span class="t" style="left:1351.20px;top:332.70px;font-size:23.98px;line-height:31px;height:31px;color:#111;transform:scaleX(0.9296);">CO2 Mineral (mol)</span>
<div style="left:1348px;top:363.75px;width:652px;height:26px;background:#9ba4b3;"></div>
<div style="left:1314.3px;top:363.25px;width:28px;height:27px;background:#fff;border:2.5px solid #808080;box-sizing:border-box;"></div>
<svg style="left:1314.3px;top:363.25px" width="28" height="28" viewBox="0 0 28 28"><path d="M4.3 13.6 L7.8 10.3 L13.0 15.4 L20.6 4.4 L24.2 6.6 L14.6 21.9 L12.2 21.9 Z" fill="#050505"/></svg>
<span class="t" style="left:1351.20px;top:359.85px;font-size:23.98px;line-height:31px;height:31px;color:#f1f2f4;transform:scaleX(0.9376);">CO2 Super-Critical (mol)</span>
<div style="left:1675px;top:740.5px;width:160px;height:44.5px;background:#e1e2e4;border:2.4px solid #a3a7b0;box-sizing:border-box;"></div>
<span class="t" style="left:1737.82px;top:747.00px;font-size:23.69px;line-height:32px;height:32px;color:#4e596b;transform:scaleX(1.0185);">OK</span>
<div style="left:1841.5px;top:740.5px;width:160px;height:44.5px;background:#e1e2e4;border:2.4px solid #a3a7b0;box-sizing:border-box;"></div>
<span class="t" style="left:1886.42px;top:747.00px;font-size:23.69px;line-height:32px;height:32px;color:#4e596b;transform:scaleX(0.9693);">Cancel</span>
<div style="left:2016px;top:778px;width:2.2px;height:2.2px;background:#b9bcc3;"></div>
<div style="left:2016px;top:785px;width:2.2px;height:2.2px;background:#b9bcc3;"></div>
<div style="left:2016px;top:791.5px;width:2.2px;height:2.2px;background:#b9bcc3;"></div>
<div style="left:2016px;top:798px;width:2.2px;height:2.2px;background:#b9bcc3;"></div>
<div style="left:2009.5px;top:785px;width:2.2px;height:2.2px;background:#b9bcc3;"></div>
<div style="left:2009.5px;top:791.5px;width:2.2px;height:2.2px;background:#b9bcc3;"></div>
<div style="left:2009.5px;top:798px;width:2.2px;height:2.2px;background:#b9bcc3;"></div>
<div style="left:2003px;top:791.5px;width:2.2px;height:2.2px;background:#b9bcc3;"></div>
<div style="left:2003px;top:798px;width:2.2px;height:2.2px;background:#b9bcc3;"></div>
<div style="left:1996.5px;top:798px;width:2.2px;height:2.2px;background:#b9bcc3;"></div>
<div style="left:1702px;top:114.5px;width:145px;height:61px;border:6.8px solid #fb1c10;border-radius:7px;box-sizing:border-box;"></div>
<div style="left:1289px;top:216px;width:359.5px;height:200px;border:7px solid #fb1c10;border-radius:9px;box-sizing:border-box;"></div>
<div style="left:487.8px;top:835.4px;width:374.2px;height:52.6px;border:7.3px solid #fb1c10;border-radius:9px;box-sizing:border-box;"></div>
<div style="left:1668.5px;top:835.5px;width:49px;height:51.5px;border:7.5px solid #fb1c10;border-radius:10px;box-sizing:border-box;"></div>
<div style="left:52.5px;top:1031px;width:898px;height:83px;border:7px solid #fb1c10;border-radius:9px;box-sizing:border-box;"></div>
<div style="left:-5px;top:-2px;width:10px;height:10px;background:#fff;border:1.6px solid #4a4a4a;border-radius:50%;box-sizing:border-box;"></div>
<div style="left:1016px;top:-3px;width:10px;height:10px;background:#fff;border:1.6px solid #4a4a4a;border-radius:50%;box-sizing:border-box;"></div>
<div style="left:2037.5px;top:-1px;width:10px;height:10px;background:#fff;border:1.6px solid #4a4a4a;border-radius:50%;box-sizing:border-box;"></div>
<div style="left:-5px;top:579.5px;width:10px;height:10px;background:#fff;border:1.6px solid #4a4a4a;border-radius:50%;box-sizing:border-box;"></div>
<div style="left:2037.5px;top:579.5px;width:10px;height:10px;background:#fff;border:1.6px solid #4a4a4a;border-radius:50%;box-sizing:border-box;"></div>
<div style="left:-5px;top:1164px;width:10px;height:10px;background:#fff;border:1.6px solid #4a4a4a;border-radius:50%;box-sizing:border-box;"></div>
<div style="left:1016px;top:1164.5px;width:10px;height:10px;background:#fff;border:1.6px solid #4a4a4a;border-radius:50%;box-sizing:border-box;"></div>
<div style="left:2037.5px;top:1162.5px;width:10px;height:10px;background:#fff;border:1.6px solid #4a4a4a;border-radius:50%;box-sizing:border-box;"></div>
</div>
</body></html>
